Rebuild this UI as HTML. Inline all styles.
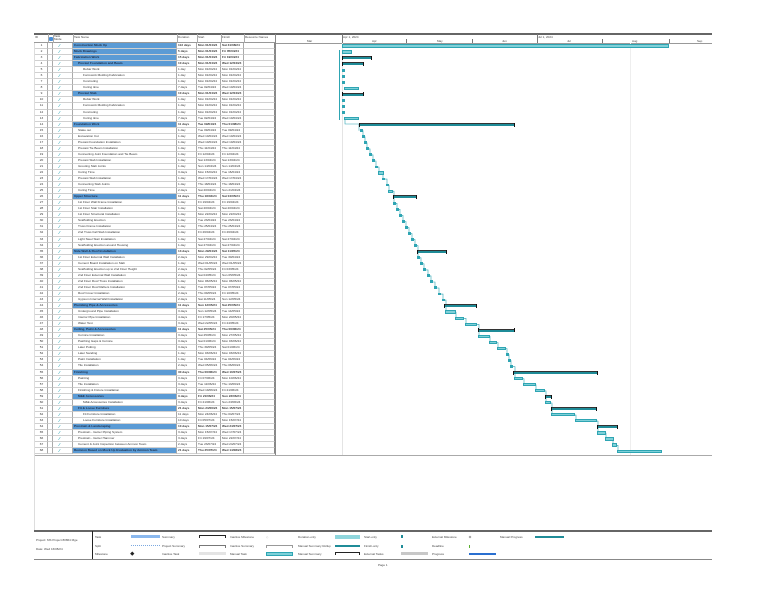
<!DOCTYPE html>
<html><head><meta charset="utf-8">
<style>
*{margin:0;padding:0;box-sizing:border-box}
body{width:768px;height:594px;background:#fff;position:relative;overflow:hidden;font-family:"Liberation Sans",sans-serif;color:#333}
.a{position:absolute}
#rows{position:absolute;top:43px;left:0;width:768px}
.r{position:relative;height:6.05px;display:flex;padding-left:34px;font-size:3.1px;line-height:5.8px}
.r span{display:block;height:6.05px;border-right:0.6px solid #aaa;border-bottom:0.5px solid #d0d0d0;white-space:nowrap;overflow:hidden;padding-left:1px}
.r span:nth-child(1){width:14px;text-align:center;border-left:0.6px solid #aaa}
.r span:nth-child(2){width:5px}
.r span:nth-child(3){width:20px;color:#1fa0b0;font-weight:bold;padding-left:6px;font-size:4.5px}
.r span:nth-child(4){width:104px}
.r span:nth-child(5){width:20px}
.r span:nth-child(6){width:24px}
.r span:nth-child(7){width:23px}
.r span:nth-child(8){width:31px;border-right:0.8px solid #888}
.s span:nth-child(4){background:#5b9bd5;font-weight:bold;color:#1a2a44}
.s span:nth-child(5),.s span:nth-child(6),.s span:nth-child(7){font-weight:bold}
.l2 span:nth-child(4){padding-left:5px}
.l3 span:nth-child(4){padding-left:10px}
.b{position:absolute;top:1.6px;height:2.8px;background:#2ea5b3}
.m{position:absolute;top:1.4px;height:3.2px;background:#7fd0d8;border:0.5px solid #2ea5b3}
.S{position:absolute;top:1.3px;height:3px;background:#1f8c98;border-top:1px solid #333}
.S:before,.S:after{content:"";position:absolute;top:-1.3px;width:1.3px;height:4px;background:#111}
.S:before{left:0}.S:after{right:0}
.hd{font-size:3px;color:#444}
.lg{position:absolute;font-size:3px;color:#444}
</style></head><body>
<div class="a" style="left:34px;top:33px;width:678px;height:1.5px;background:#666"></div>
<div class="a" style="left:34px;top:34px;width:241px;height:9px;border-bottom:0.6px solid #999"></div>
<div class="a hd" style="left:35px;top:35px">ID</div>
<div class="a" style="left:49px;top:37px;width:4px;height:4px;background:#4a8fd8;border-radius:1px"></div>
<div class="a hd" style="left:54px;top:35px;line-height:3.4px">Task<br>Mode</div>
<div class="a hd" style="left:74px;top:35px">Task Name</div>
<div class="a hd" style="left:178px;top:35px">Duration</div>
<div class="a hd" style="left:198px;top:35px">Start</div>
<div class="a hd" style="left:222px;top:35px">Finish</div>
<div class="a hd" style="left:245px;top:35px">Resource Names</div>
<div class="a" style="left:48px;top:34px;width:0.6px;height:9px;background:#aaa"></div>
<div class="a" style="left:53px;top:34px;width:0.6px;height:9px;background:#aaa"></div>
<div class="a" style="left:73px;top:34px;width:0.6px;height:9px;background:#aaa"></div>
<div class="a" style="left:177px;top:34px;width:0.6px;height:9px;background:#aaa"></div>
<div class="a" style="left:197px;top:34px;width:0.6px;height:9px;background:#aaa"></div>
<div class="a" style="left:221px;top:34px;width:0.6px;height:9px;background:#aaa"></div>
<div class="a" style="left:244px;top:34px;width:0.6px;height:9px;background:#aaa"></div>
<div class="a" style="left:275px;top:34px;width:0.8px;height:421px;background:#888"></div>
<div class="a" style="left:276px;top:42.5px;width:436px;height:0.6px;background:#999"></div>
<div class="a hd" style="left:343px;top:35px">Apr 1, 2024</div>
<div class="a hd" style="left:538px;top:35px">Jul 1, 2024</div>
<div class="a" style="left:342px;top:34px;width:0.5px;height:9px;background:#777"></div>
<div class="a" style="left:537px;top:34px;width:0.5px;height:9px;background:#777"></div>
<div class="a" style="left:406px;top:39px;width:0.5px;height:4px;background:#777"></div>
<div class="a" style="left:472px;top:39px;width:0.5px;height:4px;background:#777"></div>
<div class="a" style="left:602px;top:39px;width:0.5px;height:4px;background:#777"></div>
<div class="a" style="left:669px;top:39px;width:0.5px;height:4px;background:#777"></div>
<div class="a hd" style="left:307px;top:39px">Mar</div>
<div class="a hd" style="left:372px;top:39px">Apr</div>
<div class="a hd" style="left:437px;top:39px">May</div>
<div class="a hd" style="left:502px;top:39px">Jun</div>
<div class="a hd" style="left:567px;top:39px">Jul</div>
<div class="a hd" style="left:632px;top:39px">Aug</div>
<div class="a hd" style="left:697px;top:39px">Sep</div>
<div class="a" style="left:342px;top:43px;width:0.5px;height:412px;background:#e4e4e4"></div>
<div class="a" style="left:630px;top:43px;width:0.5px;height:412px;background:#eee"></div>
<div class="a" style="left:339px;top:50px;width:0.6px;height:70px;background:#2ea5b3"></div>
<svg class="a" style="left:0;top:0" width="768" height="594"><path d="M345 118 V124 H359 V130.7 M361 130.7 H363 V136.8 H365 V142.8 H367 V148.9 H370 V154.9 H373 V161 H376 V167 H379 V173.1 H383 V179.1 H387 V185.2 H389 V191.2 H394 V203.3 H397 V209.3 H400 V215.4 H403 V221.5 H406 V227.5 H409 V233.6 H412 V239.6 H415 V245.7 H418 V257.8 H421 V263.8 H424 V269.9 H428 V275.9 H431 V282 H435 V288 H439 V294.1 H443 V300.1 H446 V312.2 H456 V318.3 H466 V324.3 H479 V336.4 H490 V342.5 H498 V348.5 H507 V354.6 H509 V360.6 H511 V366.7 H515 V378.8 H524 V384.8 H536 V390.9 H546 V403 H552 V415.1 H576 V421.1 H598 V433.2 H606 V439.3 H613 V445.3 H618 V451.4" fill="none" stroke="#2ea5b3" stroke-width="0.6"/></svg>
<div class="a" style="left:34px;top:454.5px;width:678px;height:0.8px;background:#aaa"></div>

<div id="rows">
<div class="r s"><span>1</span><span></span><span>⁄</span><span>Construction Mock Up</span><span>113 days</span><span>Mon 01/04/24</span><span>Sat 31/08/24</span><span></span><i class="m" style="left:342px;width:327px"></i></div>
<div class="r s"><span>2</span><span></span><span>⁄</span><span>Mock Drawings</span><span>5 days</span><span>Mon 01/04/24</span><span>Fri 05/04/24</span><span></span><i class="m" style="left:342px;width:10px"></i></div>
<div class="r s"><span>3</span><span></span><span>⁄</span><span>Fabrication Work</span><span>15 days</span><span>Mon 01/04/24</span><span>Fri 19/04/24</span><span></span><i class="S" style="left:342px;width:30px"></i></div>
<div class="r s l2"><span>4</span><span></span><span>⁄</span><span>Precast Foundation and Beam</span><span>10 days</span><span>Mon 01/04/24</span><span>Wed 12/04/24</span><span></span><i class="S" style="left:342px;width:22px"></i></div>
<div class="r l3"><span>5</span><span></span><span>⁄</span><span>Rebar Work</span><span>1 day</span><span>Mon 01/04/24</span><span>Mon 01/04/24</span><span></span><i class="b" style="left:342px;width:3px"></i></div>
<div class="r l3"><span>6</span><span></span><span>⁄</span><span>Formwork Molding Fabrication</span><span>1 day</span><span>Mon 01/04/24</span><span>Mon 01/04/24</span><span></span><i class="b" style="left:342px;width:3px"></i></div>
<div class="r l3"><span>7</span><span></span><span>⁄</span><span>Concreting</span><span>1 day</span><span>Mon 01/04/24</span><span>Mon 01/04/24</span><span></span><i class="b" style="left:342px;width:3px"></i></div>
<div class="r l3"><span>8</span><span></span><span>⁄</span><span>Curing time</span><span>7 days</span><span>Tue 02/04/24</span><span>Wed 10/04/24</span><span></span><i class="m" style="left:344px;width:15px"></i></div>
<div class="r s l2"><span>9</span><span></span><span>⁄</span><span>Precast Slab</span><span>10 days</span><span>Mon 01/04/24</span><span>Wed 12/04/24</span><span></span><i class="S" style="left:342px;width:22px"></i></div>
<div class="r l3"><span>10</span><span></span><span>⁄</span><span>Rebar Work</span><span>1 day</span><span>Mon 01/04/24</span><span>Mon 01/04/24</span><span></span><i class="b" style="left:342px;width:3px"></i></div>
<div class="r l3"><span>11</span><span></span><span>⁄</span><span>Formwork Molding Fabrication</span><span>1 day</span><span>Mon 01/04/24</span><span>Mon 01/04/24</span><span></span><i class="b" style="left:342px;width:3px"></i></div>
<div class="r l3"><span>12</span><span></span><span>⁄</span><span>Concreting</span><span>1 day</span><span>Mon 01/04/24</span><span>Mon 01/04/24</span><span></span><i class="b" style="left:342px;width:3px"></i></div>
<div class="r l3"><span>13</span><span></span><span>⁄</span><span>Curing time</span><span>7 days</span><span>Tue 02/04/24</span><span>Wed 10/04/24</span><span></span><i class="m" style="left:344px;width:15px"></i></div>
<div class="r s"><span>14</span><span></span><span>⁄</span><span>Foundation Work</span><span>11 days</span><span>Tue 09/04/24</span><span>Thu 01/08/24</span><span></span><i class="S" style="left:359px;width:156px"></i></div>
<div class="r l2"><span>15</span><span></span><span>⁄</span><span>Stake out</span><span>1 day</span><span>Tue 09/04/24</span><span>Tue 09/04/24</span><span></span><i class="b" style="left:360px;width:3px"></i></div>
<div class="r l2"><span>16</span><span></span><span>⁄</span><span>Excavation Cut</span><span>1 day</span><span>Wed 10/04/24</span><span>Wed 10/04/24</span><span></span><i class="b" style="left:362px;width:3px"></i></div>
<div class="r l2"><span>17</span><span></span><span>⁄</span><span>Precast Foundation Installation</span><span>1 day</span><span>Wed 10/04/24</span><span>Wed 10/04/24</span><span></span><i class="b" style="left:364px;width:3px"></i></div>
<div class="r l2"><span>18</span><span></span><span>⁄</span><span>Precast Tie Beam Installation</span><span>1 day</span><span>Thu 11/04/24</span><span>Thu 11/04/24</span><span></span><i class="b" style="left:366px;width:3px"></i></div>
<div class="r l2"><span>19</span><span></span><span>⁄</span><span>Connecting Joint Foundation and Tie Beam</span><span>1 day</span><span>Fri 12/04/24</span><span>Fri 12/04/24</span><span></span><i class="b" style="left:369px;width:3px"></i></div>
<div class="r l2"><span>20</span><span></span><span>⁄</span><span>Precast Slab Installation</span><span>1 day</span><span>Sat 13/04/24</span><span>Sat 13/04/24</span><span></span><i class="b" style="left:372px;width:3px"></i></div>
<div class="r l2"><span>21</span><span></span><span>⁄</span><span>Grouting Slab Joints</span><span>1 day</span><span>Sun 14/04/24</span><span>Sun 14/04/24</span><span></span><i class="b" style="left:375px;width:3px"></i></div>
<div class="r l2"><span>22</span><span></span><span>⁄</span><span>Curing Time</span><span>3 days</span><span>Mon 15/04/24</span><span>Tue 16/04/24</span><span></span><i class="m" style="left:378px;width:6px"></i></div>
<div class="r l2"><span>23</span><span></span><span>⁄</span><span>Precast Slab Installation</span><span>1 day</span><span>Wed 17/04/24</span><span>Wed 17/04/24</span><span></span><i class="b" style="left:382px;width:3px"></i></div>
<div class="r l2"><span>24</span><span></span><span>⁄</span><span>Connecting Slab Joints</span><span>1 day</span><span>Thu 18/04/24</span><span>Thu 18/04/24</span><span></span><i class="b" style="left:386px;width:3px"></i></div>
<div class="r l2"><span>25</span><span></span><span>⁄</span><span>Curing Time</span><span>2 days</span><span>Sat 20/04/24</span><span>Sun 21/04/24</span><span></span><i class="m" style="left:388px;width:5px"></i></div>
<div class="r s"><span>26</span><span></span><span>⁄</span><span>Upper Structure</span><span>11 days</span><span>Thu 18/04/24</span><span>Sat 04/05/24</span><span></span><i class="S" style="left:393px;width:24px"></i></div>
<div class="r l2"><span>27</span><span></span><span>⁄</span><span>1st Floor Wall Frame Installation</span><span>1 day</span><span>Fri 19/04/24</span><span>Fri 19/04/24</span><span></span><i class="b" style="left:393px;width:3px"></i></div>
<div class="r l2"><span>28</span><span></span><span>⁄</span><span>1st Floor Stair Installation</span><span>1 day</span><span>Sat 20/04/24</span><span>Sat 20/04/24</span><span></span><i class="b" style="left:396px;width:3px"></i></div>
<div class="r l2"><span>29</span><span></span><span>⁄</span><span>1st Floor Structural Installation</span><span>1 day</span><span>Mon 22/04/24</span><span>Mon 22/04/24</span><span></span><i class="b" style="left:399px;width:3px"></i></div>
<div class="r l2"><span>30</span><span></span><span>⁄</span><span>Scaffolding Erection</span><span>1 day</span><span>Tue 23/04/24</span><span>Tue 23/04/24</span><span></span><i class="b" style="left:402px;width:3px"></i></div>
<div class="r l2"><span>31</span><span></span><span>⁄</span><span>Truss Frame Installation</span><span>1 day</span><span>Thu 25/04/24</span><span>Thu 25/04/24</span><span></span><i class="b" style="left:405px;width:3px"></i></div>
<div class="r l2"><span>32</span><span></span><span>⁄</span><span>2nd Truss Fall Slab Installation</span><span>1 day</span><span>Fri 26/04/24</span><span>Fri 26/04/24</span><span></span><i class="b" style="left:408px;width:3px"></i></div>
<div class="r l2"><span>33</span><span></span><span>⁄</span><span>Light Steel Stair Installation</span><span>1 day</span><span>Sat 27/04/24</span><span>Sat 27/04/24</span><span></span><i class="b" style="left:411px;width:3px"></i></div>
<div class="r l2"><span>34</span><span></span><span>⁄</span><span>Scaffolding Erection around Housing</span><span>1 day</span><span>Sat 27/04/24</span><span>Sat 27/04/24</span><span></span><i class="b" style="left:414px;width:3px"></i></div>
<div class="r s"><span>35</span><span></span><span>⁄</span><span>Side Wall &amp; Roof Installation</span><span>13 days</span><span>Mon 29/04/24</span><span>Sat 11/05/24</span><span></span><i class="S" style="left:417px;width:30px"></i></div>
<div class="r l2"><span>36</span><span></span><span>⁄</span><span>1st Floor External Wall Installation</span><span>2 days</span><span>Mon 29/04/24</span><span>Tue 30/04/24</span><span></span><i class="b" style="left:417px;width:3px"></i></div>
<div class="r l2"><span>37</span><span></span><span>⁄</span><span>Cement Board Installation on Slab</span><span>1 day</span><span>Wed 01/05/24</span><span>Wed 01/05/24</span><span></span><i class="b" style="left:420px;width:3px"></i></div>
<div class="r l2"><span>38</span><span></span><span>⁄</span><span>Scaffolding Erection up to 2nd Floor Height</span><span>2 days</span><span>Thu 02/05/24</span><span>Fri 03/05/24</span><span></span><i class="b" style="left:423px;width:3px"></i></div>
<div class="r l2"><span>39</span><span></span><span>⁄</span><span>2nd Floor External Wall Installation</span><span>2 days</span><span>Sat 04/05/24</span><span>Sun 05/05/24</span><span></span><i class="b" style="left:427px;width:3px"></i></div>
<div class="r l2"><span>40</span><span></span><span>⁄</span><span>2nd Floor Roof Truss Installation</span><span>1 day</span><span>Mon 06/05/24</span><span>Mon 06/05/24</span><span></span><i class="b" style="left:430px;width:3px"></i></div>
<div class="r l2"><span>41</span><span></span><span>⁄</span><span>2nd Floor Roof Rafters Installation</span><span>1 day</span><span>Tue 07/05/24</span><span>Tue 07/05/24</span><span></span><i class="b" style="left:434px;width:3px"></i></div>
<div class="r l2"><span>42</span><span></span><span>⁄</span><span>Roof Cover Installation</span><span>2 days</span><span>Thu 09/05/24</span><span>Fri 10/05/24</span><span></span><i class="b" style="left:438px;width:3px"></i></div>
<div class="r l2"><span>43</span><span></span><span>⁄</span><span>Gypsum Internal Wall Installation</span><span>2 days</span><span>Sat 11/05/24</span><span>Sun 12/05/24</span><span></span><i class="b" style="left:442px;width:3px"></i></div>
<div class="r s"><span>44</span><span></span><span>⁄</span><span>Plumbing Pipe &amp; Accessories</span><span>11 days</span><span>Sun 12/05/24</span><span>Sat 25/05/24</span><span></span><i class="S" style="left:444px;width:33px"></i></div>
<div class="r l2"><span>45</span><span></span><span>⁄</span><span>Underground Pipe Installation</span><span>3 days</span><span>Sun 12/05/24</span><span>Tue 14/05/24</span><span></span><i class="m" style="left:445px;width:11px"></i></div>
<div class="r l2"><span>46</span><span></span><span>⁄</span><span>Interior Pipe Installation</span><span>4 days</span><span>Fri 17/05/24</span><span>Mon 20/05/24</span><span></span><i class="m" style="left:455px;width:9px"></i></div>
<div class="r l2"><span>47</span><span></span><span>⁄</span><span>Water Test</span><span>3 days</span><span>Wed 22/05/24</span><span>Fri 24/05/24</span><span></span><i class="m" style="left:465px;width:12px"></i></div>
<div class="r s"><span>48</span><span></span><span>⁄</span><span>Ceiling, Paint &amp; Accessories</span><span>11 days</span><span>Sat 25/05/24</span><span>Thu 06/06/24</span><span></span><i class="S" style="left:478px;width:37px"></i></div>
<div class="r l2"><span>49</span><span></span><span>⁄</span><span>Cornice Installation</span><span>3 days</span><span>Sat 25/05/24</span><span>Mon 27/05/24</span><span></span><i class="m" style="left:478px;width:12px"></i></div>
<div class="r l2"><span>50</span><span></span><span>⁄</span><span>Patching Gaps &amp; Cornice</span><span>3 days</span><span>Sat 01/06/24</span><span>Mon 03/06/24</span><span></span><i class="m" style="left:489px;width:8px"></i></div>
<div class="r l2"><span>51</span><span></span><span>⁄</span><span>Later Putting</span><span>3 days</span><span>Thu 30/05/24</span><span>Sat 01/06/24</span><span></span><i class="m" style="left:497px;width:9px"></i></div>
<div class="r l2"><span>52</span><span></span><span>⁄</span><span>Later Sanding</span><span>1 day</span><span>Mon 03/06/24</span><span>Mon 03/06/24</span><span></span><i class="b" style="left:506px;width:3px"></i></div>
<div class="r l2"><span>53</span><span></span><span>⁄</span><span>Paint Installation</span><span>1 day</span><span>Tue 04/06/24</span><span>Tue 04/06/24</span><span></span><i class="b" style="left:508px;width:3px"></i></div>
<div class="r l2"><span>54</span><span></span><span>⁄</span><span>Tile Installation</span><span>2 days</span><span>Wed 05/06/24</span><span>Thu 06/06/24</span><span></span><i class="b" style="left:510px;width:3px"></i></div>
<div class="r s"><span>55</span><span></span><span>⁄</span><span>Finishing</span><span>30 days</span><span>Thu 06/06/24</span><span>Wed 10/07/24</span><span></span><i class="S" style="left:513px;width:85px"></i></div>
<div class="r l2"><span>56</span><span></span><span>⁄</span><span>Painting</span><span>3 days</span><span>Fri 07/06/24</span><span>Mon 10/06/24</span><span></span><i class="m" style="left:514px;width:9px"></i></div>
<div class="r l2"><span>57</span><span></span><span>⁄</span><span>Tile Installation</span><span>3 days</span><span>Tue 11/06/24</span><span>Thu 13/06/24</span><span></span><i class="m" style="left:523px;width:13px"></i></div>
<div class="r l2"><span>58</span><span></span><span>⁄</span><span>Finishing &amp; Fixture Installation</span><span>3 days</span><span>Wed 19/06/24</span><span>Fri 21/06/24</span><span></span><i class="m" style="left:535px;width:10px"></i></div>
<div class="r s l2"><span>59</span><span></span><span>⁄</span><span>M&amp;E Accessories</span><span>3 days</span><span>Fri 21/06/24</span><span>Sun 23/06/24</span><span></span><i class="S" style="left:545px;width:7px"></i></div>
<div class="r l3"><span>60</span><span></span><span>⁄</span><span>M&amp;E Accessories Installation</span><span>3 days</span><span>Fri 21/06/24</span><span>Sun 23/06/24</span><span></span><i class="m" style="left:545px;width:6px"></i></div>
<div class="r s l2"><span>61</span><span></span><span>⁄</span><span>Fit &amp; Loose Furniture</span><span>21 days</span><span>Mon 24/06/24</span><span>Mon 15/07/24</span><span></span><i class="S" style="left:551px;width:46px"></i></div>
<div class="r l3"><span>62</span><span></span><span>⁄</span><span>Fit Furniture Installation</span><span>11 days</span><span>Mon 24/06/24</span><span>Thu 04/07/24</span><span></span><i class="m" style="left:551px;width:24px"></i></div>
<div class="r l3"><span>63</span><span></span><span>⁄</span><span>Loose Furniture Installation</span><span>10 days</span><span>Fri 05/07/24</span><span>Mon 15/07/24</span><span></span><i class="m" style="left:575px;width:22px"></i></div>
<div class="r s"><span>64</span><span></span><span>⁄</span><span>Prestrain &amp; Landscaping</span><span>10 days</span><span>Mon 15/07/24</span><span>Wed 24/07/24</span><span></span><i class="S" style="left:597px;width:21px"></i></div>
<div class="r l2"><span>65</span><span></span><span>⁄</span><span>Prestrain - Gutter Piping System</span><span>3 days</span><span>Mon 15/07/24</span><span>Wed 17/07/24</span><span></span><i class="m" style="left:597px;width:9px"></i></div>
<div class="r l2"><span>66</span><span></span><span>⁄</span><span>Prestrain - Gutter Hammer</span><span>3 days</span><span>Fri 19/07/24</span><span>Mon 22/07/24</span><span></span><i class="m" style="left:605px;width:9px"></i></div>
<div class="r l2"><span>67</span><span></span><span>⁄</span><span>Cement &amp; Joint Inspection between Ammon Team</span><span>2 days</span><span>Tue 23/07/24</span><span>Wed 24/07/24</span><span></span><i class="m" style="left:612px;width:5px"></i></div>
<div class="r s"><span>68</span><span></span><span>⁄</span><span>Revision Based on Mock Up Evaluation by Ammon Team</span><span>21 days</span><span>Thu 25/07/24</span><span>Wed 14/08/24</span><span></span><i class="m" style="left:617px;width:45px"></i></div>
</div>

<div class="a" style="left:34px;top:43px;width:0.6px;height:488px;background:#ddd"></div>
<div class="a" style="left:34px;top:530px;width:678px;height:1.5px;background:#666"></div>
<div class="a" style="left:34px;top:558.5px;width:678px;height:1.5px;background:#888"></div>
<div class="a" style="left:91.5px;top:531px;width:0.8px;height:28px;background:#222"></div>
<div class="lg" style="left:36px;top:538px">Project: MS Project 80864 Mge</div>
<div class="lg" style="left:36px;top:546.5px">Date: Wed 16/08/24</div>

<div class="lg" style="left:95px;top:534.5px">Task</div>
<div class="lg" style="left:95px;top:544px">Split</div>
<div class="lg" style="left:95px;top:551.5px">Milestone</div>
<div class="a" style="left:131px;top:535px;width:29px;height:3px;background:#8ab8ee"></div>
<div class="a" style="left:131px;top:545px;width:29px;height:0;border-top:1px dotted #7aa8e0"></div>
<div class="a" style="left:131px;top:552px;width:2.5px;height:2.5px;background:#222;transform:rotate(45deg)"></div>

<div class="lg" style="left:162px;top:534.5px">Summary</div>
<div class="lg" style="left:162px;top:544px">Project Summary</div>
<div class="lg" style="left:162px;top:551.5px">Inactive Task</div>
<div class="a" style="left:199px;top:535px;width:27px;height:3px;border:0.8px solid #222;border-bottom:none"></div>
<div class="a" style="left:199px;top:544.5px;width:27px;height:3px;border:0.8px solid #777;border-bottom:none"></div>
<div class="a" style="left:199px;top:552px;width:27px;height:3px;background:#e4e4e4"></div>

<div class="lg" style="left:230px;top:534.5px">Inactive Milestone</div>
<div class="lg" style="left:230px;top:544px">Inactive Summary</div>
<div class="lg" style="left:230px;top:551.5px">Manual Task</div>
<div class="lg" style="left:266px;top:534.5px;color:#aaa">◇</div>
<div class="a" style="left:266px;top:544.5px;width:27px;height:3px;border:0.6px solid #999;border-bottom:none"></div>
<div class="a" style="left:266px;top:552px;width:27px;height:3.5px;background:#7fd0d8;border:0.5px solid #2ea5b3"></div>

<div class="lg" style="left:298px;top:534.5px">Duration-only</div>
<div class="lg" style="left:298px;top:544px">Manual Summary Rollup</div>
<div class="lg" style="left:298px;top:551.5px">Manual Summary</div>
<div class="a" style="left:335px;top:535px;width:25px;height:3.5px;background:#8fd6dd"></div>
<div class="a" style="left:335px;top:545px;width:25px;height:1.8px;background:#1f8c98"></div>
<div class="a" style="left:335px;top:552px;width:25px;height:3px;border:0.8px solid #222;border-bottom:none"></div>

<div class="lg" style="left:364px;top:534.5px">Start-only</div>
<div class="lg" style="left:364px;top:544px">Finish-only</div>
<div class="lg" style="left:364px;top:551.5px">External Tasks</div>
<div class="a" style="left:401px;top:535px;width:1.5px;height:3px;background:#1f8c98"></div>
<div class="a" style="left:401px;top:544.5px;width:1.5px;height:3px;background:#1f8c98"></div>
<div class="a" style="left:401px;top:552px;width:27px;height:3px;background:#c8c8c8"></div>

<div class="lg" style="left:432px;top:534.5px">External Milestone</div>
<div class="lg" style="left:432px;top:544px">Deadline</div>
<div class="lg" style="left:432px;top:551.5px">Progress</div>
<div class="a" style="left:469px;top:535.5px;width:2px;height:2px;background:#999;transform:rotate(45deg)"></div>
<div class="a" style="left:469px;top:544.5px;width:1.2px;height:3px;background:#5ab030"></div>
<div class="a" style="left:469px;top:553px;width:27px;height:1.5px;background:#2a6fd0"></div>

<div class="lg" style="left:500px;top:534.5px">Manual Progress</div>
<div class="a" style="left:535px;top:536px;width:29px;height:1.5px;background:#1f8c98"></div>

<div class="lg" style="left:378px;top:563px">Page 1</div>
</body></html>
